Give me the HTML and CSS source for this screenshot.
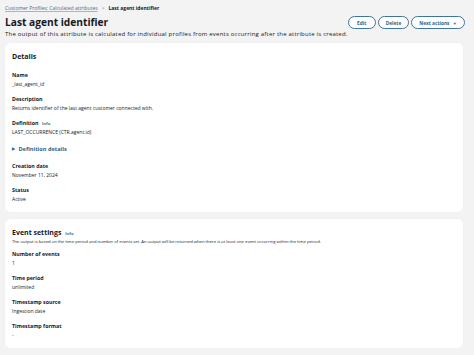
FILE: index.html
```html
<!DOCTYPE html>
<html lang="en">
<head>
    <meta charset="UTF-8">
    <title>Last agent identifier</title>
    <link rel="stylesheet" href="styles.css">
</head>
<body>
    <div class="page">
        <!-- Breadcrumb -->
        <div class="breadcrumb">
            <a href="#">Customer Profiles: Calculated attributes</a>
            <span class="sep">&gt;</span>
            <span class="current">Last agent identifier</span>
        </div>

        <!-- Page header -->
        <div class="page-header">
            <div>
                <h1>Last agent identifier</h1>
                <p class="subtitle">The output of this attribute is calculated for individual profiles from events occurring after the attribute is created.</p>
            </div>
            <div class="actions">
                <button class="btn btn-edit">Edit</button>
                <button class="btn">Delete</button>
                <button class="btn">Next actions <span class="caret">&#9660;</span></button>
            </div>
        </div>

        <!-- Details -->
        <div class="card">
            <h2>Details</h2>
            <div class="field">
                <div class="label">Name</div>
                <div class="value">_last_agent_id</div>
            </div>
            <div class="field">
                <div class="label">Description</div>
                <div class="value">Returns identifier of the last agent customer connected with.</div>
            </div>
            <div class="field">
                <div class="label">Definition <a class="info" href="#">Info</a></div>
                <div class="value">LAST_OCCURRENCE (CTR.agent.id)</div>
            </div>
            <div class="expander"><span class="arrow">&#9654;</span> Definition details</div>
            <div class="field">
                <div class="label">Creation date</div>
                <div class="value">November 11, 2024</div>
            </div>
            <div class="field">
                <div class="label">Status</div>
                <div class="value">Active</div>
            </div>
        </div>

        <!-- Event settings -->
        <div class="card">
            <h2>Event settings <a class="info" href="#">Info</a></h2>
            <p class="card-desc">The output is based on the time period and number of events set. An output will be returned when there is at least one event occurring within the time period.</p>
            <div class="field">
                <div class="label">Number of events</div>
                <div class="value">1</div>
            </div>
            <div class="field">
                <div class="label">Time period</div>
                <div class="value">unlimited</div>
            </div>
            <div class="field">
                <div class="label">Timestamp source</div>
                <div class="value">Ingestion date</div>
            </div>
            <div class="field">
                <div class="label">Timestamp format</div>
                <div class="value">-</div>
            </div>
        </div>
    </div>
</body>
</html>
```

FILE: styles.css
```css
body, html {
    margin: 0;
    padding: 0;
    background-color: #f3f3f3;
    font-family: "Open Sans", Arial, sans-serif;
    color: #16191f;
}

.page {
    padding: 4px 11px 0 5px;
}

/* Breadcrumb */
.breadcrumb {
    font-size: 5px;
    line-height: 8px;
    display: flex;
    align-items: center;
    gap: 4px;
}

.breadcrumb a {
    color: #3b6f8f;
    text-decoration: underline;
    text-decoration-color: #9fb8c8;
}

.breadcrumb .sep {
    color: #687078;
}

.breadcrumb .current {
    font-weight: bold;
}

/* Header */
.page-header {
    display: flex;
    justify-content: space-between;
    align-items: flex-start;
    margin-top: 3px;
}

h1 {
    font-size: 10.2px;
    line-height: 14px;
    margin: 0;
    font-weight: bold;
}

.subtitle {
    font-size: 6px;
    letter-spacing: 0.21px;
    line-height: 8px;
    margin: 1px 0 0;
    color: #16191f;
    white-space: nowrap;
}

.actions {
    display: flex;
    flex-shrink: 0;
    gap: 2px;
    margin-top: 1px;
}

.btn {
    font-family: inherit;
    font-size: 4.8px;
    font-weight: bold;
    color: #2f6585;
    background-color: #fff;
    border: 1px solid #3f7597;
    border-radius: 8px;
    height: 13px;
    padding: 0 7px;
    white-space: nowrap;
    cursor: pointer;
}

.btn-edit {
    min-width: 28px;
}

.btn .caret {
    font-size: 4px;
    margin-left: 2px;
}

/* Cards */
.card {
    background-color: #fff;
    border-radius: 5px;
    padding: 9px 7px 8px;
    margin-top: 5px;
    box-shadow: 0 0 1px rgba(0, 0, 0, 0.08);
}

.card + .card {
    margin-top: 7px;
}

h2 {
    font-size: 7px;
    line-height: 9px;
    margin: 0 0 10px;
    font-weight: bold;
}

.info {
    font-size: 4.2px;
    font-weight: bold;
    color: #3b6f8f;
    text-decoration: none;
    margin-left: 2px;
}

.card-desc {
    font-size: 4.2px;
    line-height: 6px;
    margin: -9px 0 2px;
}

.field {
    margin-top: 6px;
}

.card-desc + .field {
    margin-top: 5px;
}

.label {
    font-size: 5.3px;
    line-height: 9px;
    font-weight: bold;
}

.value {
    font-size: 5px;
    line-height: 9px;
}

.expander {
    font-size: 5.6px;
    line-height: 9px;
    font-weight: bold;
    color: #2f6585;
    margin-top: 7px;
    margin-bottom: 8px;
}

.expander .arrow {
    font-size: 4px;
    margin-right: 2px;
    vertical-align: 1px;
}
```
